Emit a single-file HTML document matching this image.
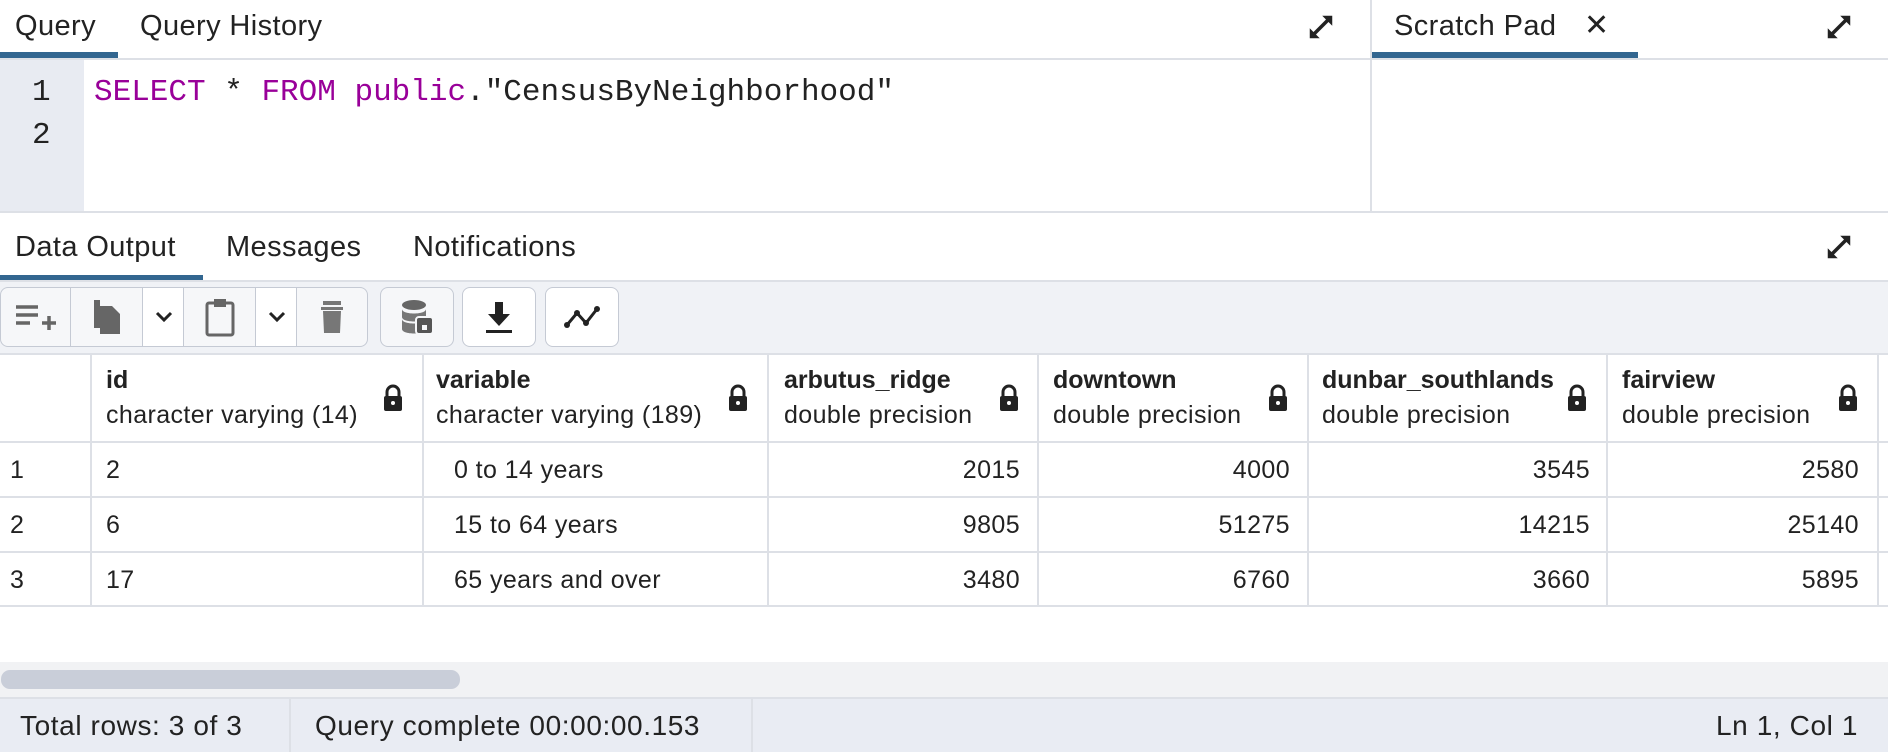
<!DOCTYPE html>
<html><head><meta charset="utf-8"><style>
*{box-sizing:border-box;margin:0;padding:0}
body{width:1888px;height:752px;overflow:hidden;background:#fff;font-family:"Liberation Sans",sans-serif;color:#222;position:relative}
.a{position:absolute}
.tab{position:absolute;font-size:29px;letter-spacing:0.4px;color:#222;white-space:nowrap}
.ul{position:absolute;height:6px;background:#326690}
.hl{position:absolute;height:2px;background:#dde0e6}
.vl{position:absolute;width:2px;background:#dde0e6}
.code{font-family:"Liberation Mono",monospace;font-size:31px}
.kw{color:#990099}
.btn{position:absolute;top:287px;height:60px;border:1.5px solid #c5cad4;background:#f6f7f9;display:flex;align-items:center;justify-content:center}
.cell{position:absolute;font-size:25px;letter-spacing:0.4px;white-space:nowrap;color:#222}
.r{text-align:right}
.st{font-size:28px;letter-spacing:0.6px}
</style></head><body>
<div class="tab" style="left:15px;top:10px">Query</div>
<div class="tab" style="left:140px;top:10px">Query History</div>
<div class="ul" style="left:0;top:52px;width:118px"></div>
<div class="hl" style="left:0;top:58px;width:1888px"></div>
<div class="vl" style="left:1370px;top:0;height:212px"></div>
<div class="tab" style="left:1394px;top:10px">Scratch Pad</div>
<div class="tab" style="left:1584px;top:8px;font-size:30px">✕</div>
<div class="ul" style="left:1372px;top:52px;width:266px"></div>
<svg class="a" style="left:1306px;top:12px" width="30" height="30" viewBox="0 0 24 24"><path d="M3 21v-8l3 3 10-10-3-3h8v8l-3-3-10 10 3 3z" fill="#222"/></svg>
<svg class="a" style="left:1824px;top:12px" width="30" height="30" viewBox="0 0 24 24"><path d="M3 21v-8l3 3 10-10-3-3h8v8l-3-3-10 10 3 3z" fill="#222"/></svg>
<div class="a" style="left:0;top:60px;width:84px;height:152px;background:#e8ebf2"></div>
<div class="a code" style="left:32px;top:75px">1</div>
<div class="a code" style="left:32px;top:118px">2</div>
<div class="a code" style="left:94px;top:75px;white-space:pre"><span class="kw">SELECT</span> * <span class="kw">FROM</span> <span class="kw">public</span>."CensusByNeighborhood"</div>
<div class="hl" style="left:0;top:211px;width:1888px"></div>
<div class="tab" style="left:15px;top:231px">Data Output</div>
<div class="tab" style="left:226px;top:231px">Messages</div>
<div class="tab" style="left:413px;top:231px">Notifications</div>
<div class="ul" style="left:0;top:275px;width:203px"></div>
<svg class="a" style="left:1824px;top:232px" width="30" height="30" viewBox="0 0 24 24"><path d="M3 21v-8l3 3 10-10-3-3h8v8l-3-3-10 10 3 3z" fill="#222"/></svg>
<div class="a" style="left:0;top:280px;width:1888px;height:74px;background:#f0f2f6;border-top:2px solid #dde0e6"></div>
<div class="btn" style="left:0;width:72px;border-radius:8px 0 0 8px"><svg width="44" height="36" viewBox="0 0 44 36"><path d="M2 8h22M2 16h22M2 24h14M28 24h14M35 17v14" stroke="#666" stroke-width="3.5"/></svg></div>
<div class="btn" style="left:70px;width:74px"><svg width="32" height="38" viewBox="0 0 32 38"><path d="M3 2h6v28h-6z" fill="#666"/><path d="M9 8h12l8 8v20h-20z" fill="#666"/></svg></div>
<div class="btn" style="left:142px;width:43px;background:#fff"><svg width="20" height="14"><path d="M3 3l7 7 7-7" stroke="#222" stroke-width="3" fill="none"/></svg></div>
<div class="btn" style="left:183px;width:74px"><svg width="32" height="40" viewBox="0 0 32 40"><rect x="3" y="6" width="26" height="32" rx="2" stroke="#666" stroke-width="3" fill="none"/><rect x="10" y="2" width="12" height="8" fill="#666"/></svg></div>
<div class="btn" style="left:255px;width:43px;background:#fff"><svg width="20" height="14"><path d="M3 3l7 7 7-7" stroke="#222" stroke-width="3" fill="none"/></svg></div>
<div class="btn" style="left:296px;width:72px;border-radius:0 8px 8px 0"><svg width="26" height="36" viewBox="0 0 26 36"><rect x="4" y="2" width="18" height="4" fill="#777"/><rect x="2" y="8" width="22" height="3" fill="#777"/><path d="M4 12h18l-1 22h-16z" fill="#777"/></svg></div>
<div class="btn" style="left:380px;width:74px;border-radius:8px"><svg width="34" height="36" viewBox="0 0 34 36"><ellipse cx="14" cy="6" rx="12" ry="5" fill="#666"/><path d="M2 10c0 6 24 6 24 0v8c0 6-24 6-24 0zM2 20c0 6 24 6 24 0v10c0 6-24 6-24 0z" fill="#777"/><rect x="16" y="18" width="17" height="17" rx="3" fill="#555" stroke="#f6f7f9" stroke-width="2"/><rect x="22" y="26" width="5" height="5" fill="#f6f7f9"/></svg></div>
<div class="btn" style="left:462px;width:74px;background:#fff;border-radius:8px"><svg width="30" height="34" viewBox="0 0 30 34"><path d="M11 2h8v12h7l-11 12-11-12h7z" fill="#222"/><rect x="2" y="30" width="26" height="3" fill="#222"/></svg></div>
<div class="btn" style="left:545px;width:74px;background:#fff;border-radius:8px"><svg width="38" height="28" viewBox="0 0 38 28"><path d="M4 22l10-12 9 10 11-14" stroke="#222" stroke-width="3" fill="none"/><circle cx="4" cy="22" r="3" fill="#222"/><circle cx="14" cy="10" r="3" fill="#222"/><circle cx="23" cy="20" r="3" fill="#222"/><circle cx="34" cy="6" r="3" fill="#222"/></svg></div>
<div class="hl" style="left:0;top:353px;width:1888px"></div>
<div class="hl" style="left:0;top:441px;width:1888px"></div>
<div class="hl" style="left:0;top:496px;width:1888px"></div>
<div class="hl" style="left:0;top:551px;width:1888px"></div>
<div class="hl" style="left:0;top:605px;width:1888px"></div>
<div class="vl" style="left:90px;top:353px;height:254px"></div>
<div class="vl" style="left:422px;top:353px;height:254px"></div>
<div class="vl" style="left:767px;top:353px;height:254px"></div>
<div class="vl" style="left:1037px;top:353px;height:254px"></div>
<div class="vl" style="left:1307px;top:353px;height:254px"></div>
<div class="vl" style="left:1606px;top:353px;height:254px"></div>
<div class="vl" style="left:1877px;top:353px;height:254px"></div>
<div class="cell" style="left:106px;top:366px;font-weight:bold;letter-spacing:0">id</div>
<div class="cell" style="left:106px;top:401px">character varying (14)</div>
<div class="cell" style="left:436px;top:366px;font-weight:bold;letter-spacing:0">variable</div>
<div class="cell" style="left:436px;top:401px">character varying (189)</div>
<div class="cell" style="left:784px;top:366px;font-weight:bold;letter-spacing:0">arbutus_ridge</div>
<div class="cell" style="left:784px;top:401px">double precision</div>
<div class="cell" style="left:1053px;top:366px;font-weight:bold;letter-spacing:0">downtown</div>
<div class="cell" style="left:1053px;top:401px">double precision</div>
<div class="cell" style="left:1322px;top:366px;font-weight:bold;letter-spacing:0">dunbar_southlands</div>
<div class="cell" style="left:1322px;top:401px">double precision</div>
<div class="cell" style="left:1622px;top:366px;font-weight:bold;letter-spacing:0">fairview</div>
<div class="cell" style="left:1622px;top:401px">double precision</div>
<svg class="a" style="left:382px;top:384px" width="22" height="28" viewBox="0 0 22 28"><path d="M5 12V8a6 6 0 0 1 12 0v4" stroke="#222" stroke-width="3" fill="none"/><rect x="2" y="12" width="18" height="15" rx="2" fill="#222"/><circle cx="11" cy="19" r="2" fill="#fff"/></svg>
<svg class="a" style="left:727px;top:384px" width="22" height="28" viewBox="0 0 22 28"><path d="M5 12V8a6 6 0 0 1 12 0v4" stroke="#222" stroke-width="3" fill="none"/><rect x="2" y="12" width="18" height="15" rx="2" fill="#222"/><circle cx="11" cy="19" r="2" fill="#fff"/></svg>
<svg class="a" style="left:998px;top:384px" width="22" height="28" viewBox="0 0 22 28"><path d="M5 12V8a6 6 0 0 1 12 0v4" stroke="#222" stroke-width="3" fill="none"/><rect x="2" y="12" width="18" height="15" rx="2" fill="#222"/><circle cx="11" cy="19" r="2" fill="#fff"/></svg>
<svg class="a" style="left:1267px;top:384px" width="22" height="28" viewBox="0 0 22 28"><path d="M5 12V8a6 6 0 0 1 12 0v4" stroke="#222" stroke-width="3" fill="none"/><rect x="2" y="12" width="18" height="15" rx="2" fill="#222"/><circle cx="11" cy="19" r="2" fill="#fff"/></svg>
<svg class="a" style="left:1566px;top:384px" width="22" height="28" viewBox="0 0 22 28"><path d="M5 12V8a6 6 0 0 1 12 0v4" stroke="#222" stroke-width="3" fill="none"/><rect x="2" y="12" width="18" height="15" rx="2" fill="#222"/><circle cx="11" cy="19" r="2" fill="#fff"/></svg>
<svg class="a" style="left:1837px;top:384px" width="22" height="28" viewBox="0 0 22 28"><path d="M5 12V8a6 6 0 0 1 12 0v4" stroke="#222" stroke-width="3" fill="none"/><rect x="2" y="12" width="18" height="15" rx="2" fill="#222"/><circle cx="11" cy="19" r="2" fill="#fff"/></svg>
<div class="cell" style="left:10px;top:456px">1</div>
<div class="cell" style="left:106px;top:456px">2</div>
<div class="cell" style="left:454px;top:456px">0 to 14 years</div>
<div class="cell r" style="left:768px;width:252px;top:456px">2015</div>
<div class="cell r" style="left:1038px;width:252px;top:456px">4000</div>
<div class="cell r" style="left:1308px;width:282px;top:456px">3545</div>
<div class="cell r" style="left:1607px;width:252px;top:456px">2580</div>
<div class="cell" style="left:10px;top:511px">2</div>
<div class="cell" style="left:106px;top:511px">6</div>
<div class="cell" style="left:454px;top:511px">15 to 64 years</div>
<div class="cell r" style="left:768px;width:252px;top:511px">9805</div>
<div class="cell r" style="left:1038px;width:252px;top:511px">51275</div>
<div class="cell r" style="left:1308px;width:282px;top:511px">14215</div>
<div class="cell r" style="left:1607px;width:252px;top:511px">25140</div>
<div class="cell" style="left:10px;top:566px">3</div>
<div class="cell" style="left:106px;top:566px">17</div>
<div class="cell" style="left:454px;top:566px">65 years and over</div>
<div class="cell r" style="left:768px;width:252px;top:566px">3480</div>
<div class="cell r" style="left:1038px;width:252px;top:566px">6760</div>
<div class="cell r" style="left:1308px;width:282px;top:566px">3660</div>
<div class="cell r" style="left:1607px;width:252px;top:566px">5895</div>
<div class="a" style="left:0;top:662px;width:1888px;height:36px;background:#f1f2f4"></div>
<div class="a" style="left:1px;top:670px;width:459px;height:19px;background:#c9ced9;border-radius:9px"></div>
<div class="a" style="left:0;top:697px;width:1888px;height:55px;background:#e9ecf3;border-top:2px solid #dde0e6"></div>
<div class="vl" style="left:289px;top:699px;height:53px"></div>
<div class="vl" style="left:751px;top:699px;height:53px"></div>
<div class="cell st" style="left:20px;top:710px">Total rows: 3 of 3</div>
<div class="cell st" style="left:315px;top:710px">Query complete 00:00:00.153</div>
<div class="cell st" style="left:1716px;top:710px">Ln 1, Col 1</div>
</body></html>
